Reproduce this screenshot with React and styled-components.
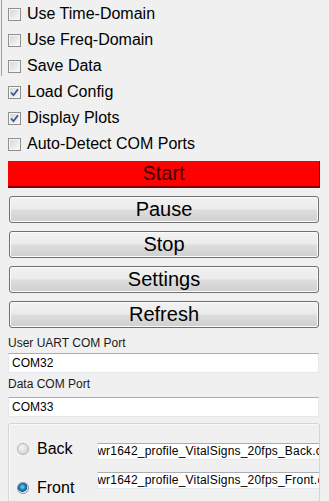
import React from 'react';
import styled, { createGlobalStyle } from 'styled-components';

const GlobalStyle = createGlobalStyle`
  html, body {
    margin: 0;
    padding: 0;
    background: #f0f0f0;
  }
  body {
    font-family: "Liberation Sans", Arial, sans-serif;
    color: #000;
  }
`;

const options = [
  { label: 'Use Time-Domain', checked: false },
  { label: 'Use Freq-Domain', checked: false },
  { label: 'Save Data', checked: false },
  { label: 'Load Config', checked: true },
  { label: 'Display Plots', checked: true },
  { label: 'Auto-Detect COM Ports', checked: false },
];

const actions = ['Pause', 'Stop', 'Settings', 'Refresh'];

const Checkbox = ({ label, checked }) => (
  <CheckRow>
    <CheckBox>
      {checked && (
        <svg width="9" height="9" viewBox="0 0 9 9">
          <path d="M1 4.5 L3.5 7.2 L8 1.2" fill="none" stroke="#3d5597" strokeWidth="1.8" />
        </svg>
      )}
    </CheckBox>
    <CheckText>{label}</CheckText>
  </CheckRow>
);

const App = () => (
  <Page>
    <GlobalStyle />
    <EdgeLine />
    <CheckList>
      {options.map((o) => (
        <Checkbox key={o.label} {...o} />
      ))}
    </CheckList>
    <Buttons>
      <StartButton>Start</StartButton>
      {actions.map((a) => (
        <Button key={a}>{a}</Button>
      ))}
    </Buttons>
    <FieldLabel $top={8}>User UART COM Port</FieldLabel>
    <TextBox>COM32</TextBox>
    <FieldLabel $top={4} $bottom={6}>Data COM Port</FieldLabel>
    <TextBox>COM33</TextBox>
    <GroupBox>
      <RadioColumn>
        <RadioRow>
          <Radio />
          <RadioText>Back</RadioText>
        </RadioRow>
        <RadioRow>
          <Radio $checked />
          <RadioText>Front</RadioText>
        </RadioRow>
      </RadioColumn>
      <FileColumn>
        <FileBox>xwr1642_profile_VitalSigns_20fps_Back.cfg</FileBox>
        <FileBox>xwr1642_profile_VitalSigns_20fps_Front.cfg</FileBox>
      </FileColumn>
    </GroupBox>
  </Page>
);

const Page = styled.div`
  position: relative;
  width: 329px;
  height: 501px;
  overflow: hidden;
  background: #f0f0f0;
`;

const EdgeLine = styled.div`
  position: absolute;
  left: 1px;
  top: 0;
  width: 1px;
  height: 76px;
  background: #a0a0a0;
`;

const CheckList = styled.div`
  display: flex;
  flex-direction: column;
  padding: 1px 0 0 8px;
`;

const CheckRow = styled.div`
  display: flex;
  align-items: center;
  height: 26px;
  gap: 6px;
`;

const CheckBox = styled.span`
  box-sizing: border-box;
  width: 13px;
  height: 13px;
  border: 1px solid #8e8f8f;
  background: linear-gradient(135deg, #d4d4d4 0%, #ececec 60%, #fafafa 100%);
  box-shadow: inset 0 0 0 1px #f6f6f6;
  display: flex;
  align-items: center;
  justify-content: center;
`;

const CheckText = styled.span`
  font-size: 16px;
  line-height: 18px;
`;

const Buttons = styled.div`
  display: flex;
  flex-direction: column;
  gap: 8px;
  margin-top: 4px;
  padding-left: 8px;
`;

const StartButton = styled.div`
  box-sizing: border-box;
  width: 312px;
  height: 27px;
  background: #ff0000;
  border-right: 1px solid #9a0000;
  border-bottom: 2px solid #8a0000;
  color: #3a0000;
  font-size: 20px;
  display: flex;
  align-items: center;
  justify-content: center;
`;

const Button = styled.div`
  box-sizing: border-box;
  width: 310px;
  height: 27px;
  margin-left: 1px;
  border: 1px solid #707070;
  border-radius: 3px;
  background: linear-gradient(#f2f2f2 0%, #ebebeb 48%, #dddddd 52%, #cfcfcf 100%);
  box-shadow: inset 0 0 0 1px #fcfcfc;
  font-size: 20px;
  display: flex;
  align-items: center;
  justify-content: center;
`;

const FieldLabel = styled.div`
  margin: ${(p) => p.$top}px 0 ${(p) => p.$bottom ?? 3}px 8px;
  font-size: 12px;
  line-height: 14px;
  color: #1a1a1a;
`;

const TextBox = styled.div`
  box-sizing: border-box;
  width: 311px;
  height: 20px;
  margin-left: 8px;
  padding-left: 3px;
  background: #fff;
  border: 1px solid #e3e9ef;
  border-top-color: #abadb3;
  font-size: 12px;
  display: flex;
  align-items: center;
`;

const GroupBox = styled.div`
  box-sizing: border-box;
  display: flex;
  width: 312px;
  height: 100px;
  margin: 6px 0 0 8px;
  padding: 15px 0 0 8px;
  border: 1px solid #d5d5d5;
  border-radius: 3px;
  box-shadow: inset 1px 1px 0 #fafafa;
`;

const RadioColumn = styled.div`
  display: flex;
  flex-direction: column;
  gap: 19px;
  width: 80px;
`;

const RadioRow = styled.div`
  display: flex;
  align-items: center;
  gap: 8px;
  height: 20px;
`;

const Radio = styled.span`
  box-sizing: border-box;
  width: 12px;
  height: 12px;
  border-radius: 50%;
  border: 1px solid ${(p) => (p.$checked ? '#8d8fb5' : '#b4b4b4')};
  background: ${(p) =>
    p.$checked
      ? 'radial-gradient(circle at 45% 40%, #7fd0f0 0%, #1b8ac0 35%, #0d4f7a 55%, #e8e8f0 62%, #d8d8e4 100%)'
      : 'radial-gradient(circle at 40% 35%, #f6f6f6 0%, #dcdcdc 60%, #c8c8c8 100%)'};
`;

const RadioText = styled.span`
  font-size: 16px;
  line-height: 20px;
`;

const FileColumn = styled.div`
  flex: 1;
  display: flex;
  flex-direction: column;
  gap: 12px;
  margin-top: 4px;
  min-width: 0;
`;

const FileBox = styled.div`
  box-sizing: border-box;
  height: 17px;
  padding-left: 1px;
  background: #fff;
  border: 1px solid #e3e9ef;
  border-top-color: #abadb3;
  border-right: none;
  font-size: 12px;
  line-height: 15px;
  letter-spacing: 0.2px;
  white-space: nowrap;
  overflow: hidden;
  text-indent: -8px;
`;

export default App;
